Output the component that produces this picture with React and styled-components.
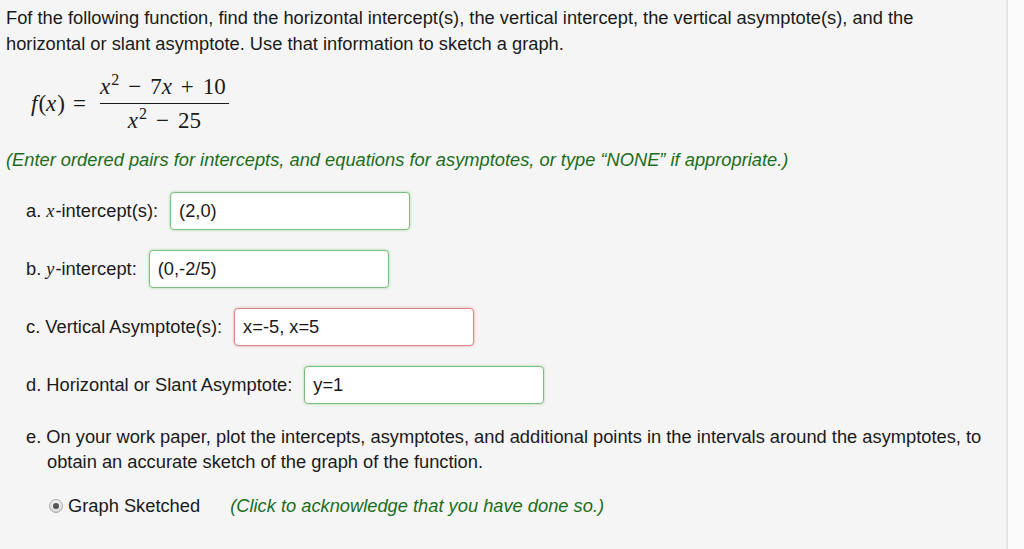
import React from "react";
import styled, { createGlobalStyle } from "styled-components";

const Global = createGlobalStyle`
  html, body { margin: 0; padding: 0; background: #fbfbfb; }
  body { font-family: "Liberation Sans", Arial, sans-serif; color: #1a1a1a; }
`;

const Panel = styled.div`
  width: 1008px;
  height: 549px;
  box-sizing: border-box;
  background: #f5f5f5;
  border-right: 2px solid #e4e4e4;
  padding: 5px 0 0 6px;
  overflow: hidden;
`;

const Prompt = styled.p`
  margin: 0;
  font-size: 18.3px;
  line-height: 26px;
  width: 940px;
`;

const Formula = styled.div`
  display: flex;
  align-items: center;
  margin: 18px 0 0 25px;
  height: 58px;
  font-family: "Liberation Serif", "DejaVu Serif", serif;
  font-size: 23px;
`;

const MI = styled.i`
  font-family: "Liberation Serif", "DejaVu Serif", serif;
  font-style: italic;
  padding-right: ${(p) => p.$pad || "0"};
`;

const Eq = styled.span`
  margin: 0 12px 0 8px;
`;

const Frac = styled.span`
  display: inline-flex;
  flex-direction: column;
  align-items: center;
  padding: 0 2px;
`;

const Num = styled.span`
  padding: 0 3px 5px 0;
  border-bottom: 1.3px solid #1a1a1a;
  line-height: 22px;
`;

const Den = styled.span`
  padding-top: 6px;
  line-height: 22px;
`;

const Sup = styled.sup`
  font-size: 16px;
  vertical-align: 9px;
  line-height: 0;
  margin-left: 1px;
`;

const Op = styled.span`
  margin: 0 9px;
`;

const Hint = styled.p`
  margin: 16px 0 0 0;
  font-size: 18.3px;
  font-style: italic;
  color: #1b6d1b;
  line-height: 22px;
`;

const List = styled.div`
  display: flex;
  flex-direction: column;
  gap: 20px;
  margin: 21px 0 0 20px;
`;

const Row = styled.div`
  display: flex;
  align-items: center;
  gap: 12px;
  font-size: 18.3px;
`;

const Label = styled.span`
  white-space: nowrap;
`;

const Field = styled.div`
  width: 240px;
  height: 38px;
  box-sizing: border-box;
  background: #fff;
  border: 1px solid ${(p) => (p.$ok ? "#7cbf7c" : "#d98585")};
  border-radius: 4px;
  box-shadow: 0 0 3px ${(p) => (p.$ok ? "rgba(80,170,80,0.45)" : "rgba(200,80,80,0.45)")};
  padding: 0 8px;
  display: flex;
  align-items: center;
  font-size: 18.3px;
`;

const Step = styled.p`
  margin: 20px 0 0 20px;
  font-size: 18.3px;
  line-height: 25px;
  padding-left: 21px;
  text-indent: -21px;
  width: 975px;
  box-sizing: border-box;
`;

const Ack = styled.div`
  display: flex;
  align-items: center;
  margin: 21px 0 0 43px;
  font-size: 18.3px;
`;

const Radio = styled.span`
  width: 14px;
  height: 14px;
  border-radius: 50%;
  box-sizing: border-box;
  border: 1px solid #a9a9a9;
  background: linear-gradient(#f4f4f4, #d6d6d6);
  display: inline-flex;
  align-items: center;
  justify-content: center;
  margin-right: 5px;
  &::after {
    content: "";
    width: 6px;
    height: 6px;
    border-radius: 50%;
    background: #555;
  }
`;

const AckNote = styled.span`
  margin-left: 30px;
  font-style: italic;
  color: #1b6d1b;
`;

const items = [
  { label: <>a. <MI $pad="1px">x</MI>-intercept(s):</>, value: "(2,0)", ok: true },
  { label: <>b. <MI $pad="1px">y</MI>-intercept:</>, value: "(0,-2/5)", ok: true },
  { label: <>c. Vertical Asymptote(s):</>, value: "x=-5, x=5", ok: false },
  { label: <>d. Horizontal or Slant Asymptote:</>, value: "y=1", ok: true },
];

export default function App() {
  return (
    <>
      <Global />
      <Panel>
        <Prompt>
          Fof the following function, find the horizontal intercept(s), the vertical intercept, the vertical
          asymptote(s), and the horizontal or slant asymptote. Use that information to sketch a graph.
        </Prompt>
        <Formula>
          <MI $pad="1px">f</MI>(<MI $pad="1px">x</MI>)<Eq>=</Eq>
          <Frac>
            <Num>
              <MI>x</MI>
              <Sup>2</Sup>
              <Op>−</Op>7<MI>x</MI>
              <Op>+</Op>10
            </Num>
            <Den>
              <MI>x</MI>
              <Sup>2</Sup>
              <Op>−</Op>25
            </Den>
          </Frac>
        </Formula>
        <Hint>
          (Enter ordered pairs for intercepts, and equations for asymptotes, or type “NONE” if appropriate.)
        </Hint>
        <List>
          {items.map((it, i) => (
            <Row key={i}>
              <Label>{it.label}</Label>
              <Field $ok={it.ok}>{it.value}</Field>
            </Row>
          ))}
        </List>
        <Step>
          e. On your work paper, plot the intercepts, asymptotes, and additional points in the intervals around the
          asymptotes, to obtain an accurate sketch of the graph of the function.
        </Step>
        <Ack>
          <Radio />
          Graph Sketched
          <AckNote>(Click to acknowledge that you have done so.)</AckNote>
        </Ack>
      </Panel>
    </>
  );
}
